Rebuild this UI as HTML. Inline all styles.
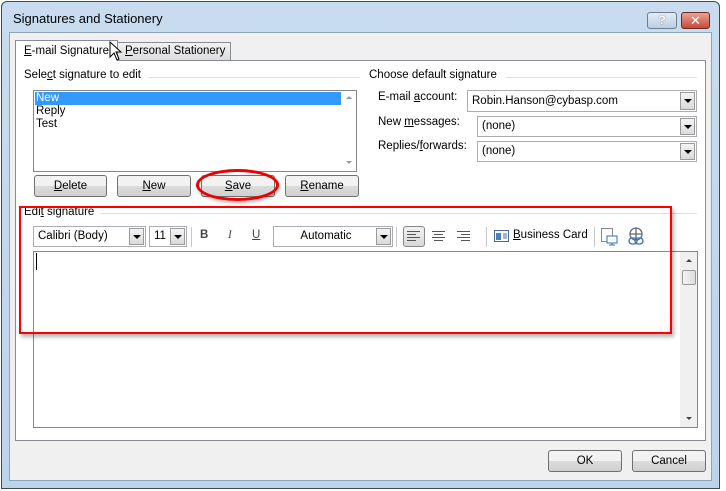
<!DOCTYPE html>
<html><head><style>
*{box-sizing:border-box}
body{margin:0;width:726px;height:491px;background:#fff;font-family:"Segoe UI","Liberation Sans","DejaVu Sans",sans-serif;font-size:11.5px;color:#000;position:relative;overflow:hidden}
.a{position:absolute}
.win{left:1px;top:1px;width:719px;height:488px;border:1px solid #3a4a5a;border-radius:6px 6px 0 0;background:linear-gradient(#c9dcef,#bcd3ea)}
.content{left:9px;top:32px;width:703px;height:449px;background:#f0f0f0;border:1px solid #8ea4bd}
.btn{position:absolute;height:22px;border:1px solid #707070;border-radius:3px;background:linear-gradient(#f2f2f2 50%,#dcdcdc 50%,#d0d0d0);text-align:center;line-height:20px}
.combo{position:absolute;height:21px;border:1px solid #abadb3;background:#fff;padding-left:4px;line-height:19px}
.dd{position:absolute;right:1px;top:1px;width:15px;bottom:1px;border:1px solid #9a9a9a;background:linear-gradient(#f4f4f4,#dadada)}
.dd:after{content:"";position:absolute;left:3px;top:6px;border-left:4px solid transparent;border-right:4px solid transparent;border-top:4px solid #000}
.line{position:absolute;height:1px;background:#d5dfe5}
u{text-decoration:underline}
.li{position:absolute;left:35px;height:13px;line-height:13px;padding-left:1px}
</style></head><body>
<div class="a win"></div>
<div class="a" style="left:13px;top:11px;font-size:13px">Signatures and Stationery</div>
<div class="a" style="left:647px;top:12px;width:30px;height:17px;border:1px solid #6d7f95;border-radius:3px;background:linear-gradient(#e3ecf6,#bccde2);text-align:center;font-size:12px;line-height:15px;color:#fff;font-weight:bold;text-shadow:0 0 1px #333">?</div>
<div class="a" style="left:681px;top:12px;width:29px;height:17px;border:1px solid #6b2a22;border-radius:3px;background:linear-gradient(#e8a396,#c9493a);text-align:center;font-size:13px;line-height:15px;color:#fff;font-weight:bold">✕</div>
<div class="a content"></div>
<div class="a" style="left:15px;top:60px;width:691px;height:381px;border:1px solid #898c95;background:#fff"></div>
<div class="a" style="left:117px;top:42px;width:114px;height:19px;border:1px solid #898c95;background:linear-gradient(#f2f2f2,#dcdcdc);padding-left:7px;line-height:17px"><u>P</u>ersonal Stationery</div>
<div class="a" style="left:15px;top:40px;width:103px;height:21px;border:1px solid #898c95;border-bottom:none;background:#fff;padding-left:8px;line-height:21px"><u>E</u>-mail Signature</div>
<svg class="a" style="left:109px;top:41px" width="14" height="22"><path d="M1 1 L1 16 L5 12 L8 19 L10 18 L7 11 L12 11 Z" fill="#fff" stroke="#000"/></svg>
<div class="a" style="left:24px;top:69px">Sele<u>c</u>t signature to edit</div>
<div class="line" style="left:149px;top:77px;width:211px"></div>
<div class="a" style="left:33px;top:90px;width:324px;height:82px;border:1px solid #828790;background:#fff"></div>
<div class="li" style="top:92px;width:306px;background:#3399ff;color:#fff">New</div>
<div class="li" style="top:105px">Reply</div>
<div class="li" style="top:118px">Test</div>
<div class="a" style="left:346px;top:96px;border-left:3px solid transparent;border-right:3px solid transparent;border-bottom:3px solid #999"></div>
<div class="a" style="left:346px;top:161px;border-left:3px solid transparent;border-right:3px solid transparent;border-top:3px solid #999"></div>
<div class="btn" style="left:34px;top:175px;width:73px"><u>D</u>elete</div>
<div class="btn" style="left:117px;top:175px;width:74px"><u>N</u>ew</div>
<div class="btn" style="left:201px;top:175px;width:74px"><u>S</u>ave</div>
<div class="btn" style="left:285px;top:175px;width:74px"><u>R</u>ename</div>
<div class="a" style="left:196px;top:169px;width:83px;height:32px;border:3px solid #e00;border-radius:50%;box-shadow:1px 2px 3px rgba(0,0,0,.3)"></div>
<div class="a" style="left:369px;top:69px">Choose default signature</div>
<div class="line" style="left:506px;top:77px;width:191px"></div>
<div class="a" style="left:378px;top:91px">E-mail <u>a</u>ccount:</div>
<div class="a" style="left:378px;top:116px">New <u>m</u>essages:</div>
<div class="a" style="left:378px;top:140px">Replies/<u>f</u>orwards:</div>
<div class="combo" style="left:467px;top:90px;width:230px;height:22px;line-height:20px">Robin.Hanson@cybasp.com<div class="dd"></div></div>
<div class="combo" style="left:477px;top:116px;width:220px">(none)<div class="dd"></div></div>
<div class="combo" style="left:477px;top:141px;width:220px">(none)<div class="dd"></div></div>
<div class="a" style="left:24px;top:206px">Edi<u>t</u> signature</div>
<div class="line" style="left:101px;top:213px;width:596px"></div>
<div class="combo" style="left:33px;top:226px;width:113px">Calibri (Body)<div class="dd"></div></div>
<div class="combo" style="left:149px;top:226px;width:38px">11<div class="dd"></div></div>
<div class="a" style="left:191px;top:227px;width:1px;height:20px;background:#c8c8c8"></div>
<div class="a" style="left:200px;top:229px;font-weight:bold;color:#444">B</div>
<div class="a" style="left:228px;top:229px;font-style:italic;font-family:'Liberation Serif',serif;color:#444">I</div>
<div class="a" style="left:252px;top:229px;color:#444"><u>U</u></div>
<div class="combo" style="left:273px;top:226px;width:120px;text-align:center;padding-right:18px">Automatic<div class="dd"></div></div>
<div class="a" style="left:396px;top:227px;width:1px;height:20px;background:#c8c8c8"></div>
<div class="a" style="left:403px;top:226px;width:22px;height:21px;border:1px solid #888;border-radius:3px;background:linear-gradient(#f2f2f2,#d8d8d8)"></div>
<svg class="a" style="left:407px;top:231px" width="70" height="12" stroke="#555" stroke-width="1"><path d="M0 .5h13M0 3.5h9M0 6.5h13M0 9.5h9M25 .5h13M27 3.5h9M25 6.5h13M27 9.5h9M50 .5h13M54 3.5h9M50 6.5h13M54 9.5h9"/></svg>
<div class="a" style="left:486px;top:227px;width:1px;height:20px;background:#c8c8c8"></div>
<svg class="a" style="left:494px;top:230px" width="16" height="13"><rect x=".5" y=".5" width="14" height="11" fill="#fff" stroke="#4a6b94"/><rect x="2" y="3" width="5" height="7" fill="#4a7fc0"/><path d="M9 4h4M9 6h4M9 8h4" stroke="#4a6b94"/></svg>
<div class="a" style="left:513px;top:229px"><u>B</u>usiness Card</div>
<div class="a" style="left:594px;top:227px;width:1px;height:20px;background:#c8c8c8"></div>
<svg class="a" style="left:601px;top:228px" width="18" height="18"><rect x=".5" y=".5" width="11" height="13" fill="#fff" stroke="#889"/><rect x="6" y="8" width="10" height="7" fill="#fff" stroke="#3070c0"/><path d="M11 15v2M8 17h6" stroke="#3070c0"/></svg>
<svg class="a" style="left:628px;top:227px" width="18" height="19" fill="none" stroke="#3a6fb0" stroke-width="1.3"><circle cx="8" cy="7" r="6" stroke="#667"/><path d="M2 7h12M8 1v12" stroke="#667"/><rect x="1" y="11" width="8" height="6" rx="3"/><rect x="7" y="11" width="8" height="6" rx="3"/></svg>
<div class="a" style="left:33px;top:251px;width:665px;height:177px;border:1px solid #828790;background:#fff"></div>
<div class="a" style="left:680px;top:252px;width:17px;height:175px;background:#f0f0f0"></div>
<div class="a" style="left:682px;top:270px;width:14px;height:15px;border:1px solid #999;border-radius:2px;background:linear-gradient(90deg,#f4f4f4,#dcdcdc)"></div>
<div class="a" style="left:686px;top:259px;border-left:3px solid transparent;border-right:3px solid transparent;border-bottom:3px solid #444"></div>
<div class="a" style="left:686px;top:417px;border-left:3px solid transparent;border-right:3px solid transparent;border-top:3px solid #444"></div>
<div class="a" style="left:36px;top:253px;width:1px;height:17px;background:#000"></div>
<div class="a" style="left:19px;top:206px;width:653px;height:128px;border:2px solid #f00;box-shadow:2px 3px 4px rgba(0,0,0,.3)"></div>
<div class="btn" style="left:548px;top:450px;width:74px">OK</div>
<div class="btn" style="left:632px;top:450px;width:74px">Cancel</div>
</body></html>
